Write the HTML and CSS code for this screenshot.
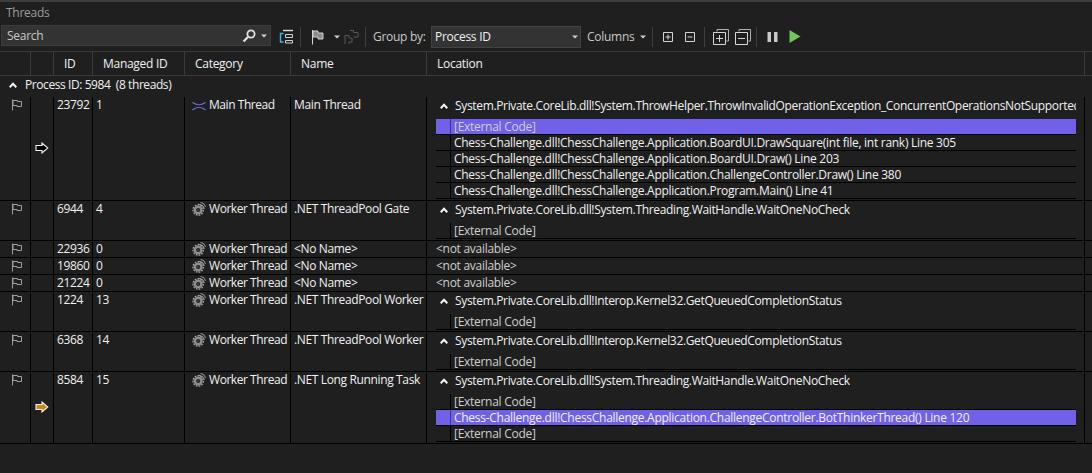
FILE: index.html
```html
<!DOCTYPE html>
<html lang="en">
<head>
<meta charset="utf-8">
<title>Threads</title>
<link rel="stylesheet" href="styles.css">
</head>
<body>
<svg class="defs" width="0" height="0" aria-hidden="true">
  <defs>
    <linearGradient id="fish" x1="0" x2="1" y1="0" y2="0">
      <stop offset="0" stop-color="#3f8fe0"/><stop offset="0.3" stop-color="#7d5cc9"/><stop offset="0.7" stop-color="#7d5cc9"/><stop offset="1" stop-color="#3f8fe0"/>
    </linearGradient>
  </defs>
  <symbol id="flag" viewBox="0 0 12 12"><path d="M1.500 0.500V11.500" stroke="#9a9a9a" fill="none"/><path d="M2 1.500H6.500V2.500H10.500V7.500H6V6.500H2Z" fill="#1f1f1f" stroke="#a0a0a0"/></symbol>
  <symbol id="gear" viewBox="0 0 14 14">
    <path d="M6.500 2.200a6.500 6.500 0 0 1 5.800 4.800" stroke="#9a9a9a" stroke-width="1.100" fill="none"/>
    <path d="M8.500 0.500a6.500 6.500 0 0 1 5 4.500" stroke="#8a8a8a" stroke-width="1.100" fill="none"/>
    <circle cx="6.200" cy="8" r="5.200" fill="none" stroke="#a4a4a4" stroke-width="1.400" stroke-dasharray="1.700 1.200"/>
    <circle cx="6.200" cy="8" r="3.300" fill="none" stroke="#8e8e8e" stroke-width="2.400"/>
    <circle cx="6.200" cy="8" r="1.400" fill="#3a3a3a"/>
  </symbol>
  <symbol id="chev" viewBox="0 0 8 6"><path d="M0.700 5.200L4 1.800L7.300 5.200" fill="none" stroke="#f4f4f4" stroke-width="2"/></symbol>
  <symbol id="tri" viewBox="0 0 6 4"><path d="M0 0.500H6L3 3.500Z" fill="#d0d0d0"/></symbol>
  <symbol id="arrow" viewBox="0 0 14 12"><path d="M1 3.500H7V1L12.800 6L7 11V8.500H1Z" stroke="#f1f1f1" stroke-width="1.100"/></symbol>
</svg>
<main class="panel">
  <div class="title">Threads</div>
  <div class="toolbar">
    <div class="search">
      <span class="search-text">Search</span>
      <svg class="ic-search" width="14" height="14" viewBox="0 0 14 14"><circle cx="9" cy="5" r="3.600" fill="none" stroke="#e2e2e2" stroke-width="1.800"/><path d="M6.200 7.800L1.500 12.500" stroke="#e2e2e2" stroke-width="2.200"/></svg>
      <svg class="ic-tri" width="6" height="4"><use href="#tri"/></svg>
    </div>
    <svg class="ic-list" width="15" height="15" viewBox="0 0 15 15"><path d="M4 1.500H14" fill="none" stroke="#e0e0e0" stroke-width="1.400"/><path d="M6.500 5.500H13.500V8.500H6.500ZM6.500 11.500H13.500V14H6.500Z" fill="none" stroke="#d4d4d4"/><path d="M4.500 4.500H1.500V13H4.500" fill="none" stroke="#3fb6e8" stroke-width="1.400"/></svg>
    <span class="sep sep-a"></span>
    <svg class="ic-flag-big" width="13" height="16" viewBox="0 0 13 16"><path d="M1.500 1V15.500" stroke="#d8d8d8"/><path d="M2 2H7V4H12V10H7V8H2Z" fill="#8c8c8c" stroke="#d0d0d0"/></svg>
    <svg class="ic-tri tri-flag" width="6" height="4"><use href="#tri"/></svg>
    <svg class="ic-flags" width="15" height="15" viewBox="0 0 15 15"><path d="M1 6.500H5V9H8V13H5V15M1 6V15M6 1.500H9.500V3.500H14V8H9.500" fill="none" stroke="#565656"/></svg>
    <span class="sep sep-b"></span>
    <span class="label">Group by:</span>
    <div class="combo"><span>Process ID</span><svg width="6" height="4"><use href="#tri"/></svg></div>
    <span class="columns">Columns</span>
    <svg class="ic-tri tri-col" width="6" height="4"><use href="#tri"/></svg>
    <span class="sep sep-c"></span>
    <svg class="ic-plus" width="10" height="10" viewBox="0 0 10 10"><path d="M0.500 0.500H9.500V9.500H0.500ZM2.500 5H7.500M5 2.500V7.500" fill="none" stroke="#d4d4d4"/></svg>
    <svg class="ic-minus" width="10" height="10" viewBox="0 0 10 10"><path d="M0.500 0.500H9.500V9.500H0.500ZM2.500 5H7.500" fill="none" stroke="#d4d4d4"/></svg>
    <span class="sep sep-d"></span>
    <svg class="ic-stack" width="16" height="16" viewBox="0 0 16 16"><path d="M4 2.500V0.500H15.500V12H13.500" fill="none" stroke="#b0b0b0"/><path d="M0.500 3.500H12.500V15.500H0.500ZM3 9.500H10M6.500 6V13" fill="#1f1f1f" stroke="#d8d8d8"/></svg>
    <svg class="ic-stack2" width="16" height="16" viewBox="0 0 16 16"><path d="M4 2.500V0.500H15.500V12H13.500" fill="none" stroke="#b0b0b0"/><path d="M0.500 3.500H12.500V15.500H0.500ZM3 9.500H10" fill="#1f1f1f" stroke="#d8d8d8"/></svg>
    <span class="sep sep-e"></span>
    <svg class="ic-pause" width="11" height="10" viewBox="0 0 11 10"><path d="M0.500 0H4V10H0.500ZM7 0H10.500V10H7Z" fill="#c8c8c8"/></svg>
    <svg class="ic-play" width="12" height="13" viewBox="0 0 12 13"><path d="M0.500 0V13L11.500 6.500Z" fill="#6fc75d"/></svg>
  </div>
  <div class="cols head">
    <div class="hc"></div><div class="hc"></div><div class="hc">ID</div><div class="hc">Managed ID</div><div class="hc">Category</div><div class="hc">Name</div><div class="hc">Location</div><div class="hc last"></div>
  </div>
  <div class="group"><svg width="8" height="6"><use href="#chev"/></svg><span>Process ID: 5984&nbsp; (8 threads)</span></div>
  <div class="rows">
    <div class="cols row">
      <div class="c"><svg class="flag" width="12" height="12"><use href="#flag"/></svg></div>
      <div class="c mark"><svg width="14" height="12" fill="#000"><use href="#arrow"/></svg></div>
      <div class="c t">23792</div><div class="c t">1</div>
      <div class="c cat"><svg width="14" height="14" viewBox="0 0 14 14"><path d="M0.500 4.500Q7 9 13.500 4.500M0.500 12Q7 6.500 13.500 12" fill="none" stroke="url(#fish)" stroke-width="1.100"/></svg><span>Main Thread</span></div>
      <div class="c t">Main Thread</div>
      <div class="c loc">
        <div class="top"><svg width="8" height="6"><use href="#chev"/></svg><span>System.Private.CoreLib.dll!System.ThrowHelper.ThrowInvalidOperationException_ConcurrentOperationsNotSupported</span></div>
        <div class="fr hl dim"><i></i><span>[External Code]</span></div>
        <div class="fr"><i></i><span>Chess-Challenge.dll!ChessChallenge.Application.BoardUI.DrawSquare(int file, int rank) Line 305</span></div>
        <div class="fr"><i></i><span>Chess-Challenge.dll!ChessChallenge.Application.BoardUI.Draw() Line 203</span></div>
        <div class="fr"><i></i><span>Chess-Challenge.dll!ChessChallenge.Application.ChallengeController.Draw() Line 380</span></div>
        <div class="fr"><i></i><span>Chess-Challenge.dll!ChessChallenge.Application.Program.Main() Line 41</span></div>
      </div>
      <div class="c"></div>
    </div>
    <div class="cols row">
      <div class="c"><svg class="flag" width="12" height="12"><use href="#flag"/></svg></div><div class="c"></div>
      <div class="c t">6944</div><div class="c t">4</div>
      <div class="c cat"><svg width="14" height="14"><use href="#gear"/></svg><span>Worker Thread</span></div>
      <div class="c t">.NET ThreadPool Gate</div>
      <div class="c loc">
        <div class="top"><svg width="8" height="6"><use href="#chev"/></svg><span>System.Private.CoreLib.dll!System.Threading.WaitHandle.WaitOneNoCheck</span></div>
        <div class="fr dim"><i></i><span>[External Code]</span></div>
      </div>
      <div class="c"></div>
    </div>
    <div class="cols row">
      <div class="c"><svg class="flag" width="12" height="12"><use href="#flag"/></svg></div><div class="c"></div>
      <div class="c t">22936</div><div class="c t">0</div>
      <div class="c cat"><svg width="14" height="14"><use href="#gear"/></svg><span>Worker Thread</span></div>
      <div class="c t">&lt;No Name&gt;</div>
      <div class="c loc"><div class="na">&lt;not available&gt;</div></div>
      <div class="c"></div>
    </div>
    <div class="cols row">
      <div class="c"><svg class="flag" width="12" height="12"><use href="#flag"/></svg></div><div class="c"></div>
      <div class="c t">19860</div><div class="c t">0</div>
      <div class="c cat"><svg width="14" height="14"><use href="#gear"/></svg><span>Worker Thread</span></div>
      <div class="c t">&lt;No Name&gt;</div>
      <div class="c loc"><div class="na">&lt;not available&gt;</div></div>
      <div class="c"></div>
    </div>
    <div class="cols row">
      <div class="c"><svg class="flag" width="12" height="12"><use href="#flag"/></svg></div><div class="c"></div>
      <div class="c t">21224</div><div class="c t">0</div>
      <div class="c cat"><svg width="14" height="14"><use href="#gear"/></svg><span>Worker Thread</span></div>
      <div class="c t">&lt;No Name&gt;</div>
      <div class="c loc"><div class="na">&lt;not available&gt;</div></div>
      <div class="c"></div>
    </div>
    <div class="cols row">
      <div class="c"><svg class="flag" width="12" height="12"><use href="#flag"/></svg></div><div class="c"></div>
      <div class="c t">1224</div><div class="c t">13</div>
      <div class="c cat"><svg width="14" height="14"><use href="#gear"/></svg><span>Worker Thread</span></div>
      <div class="c t">.NET ThreadPool Worker</div>
      <div class="c loc">
        <div class="top"><svg width="8" height="6"><use href="#chev"/></svg><span>System.Private.CoreLib.dll!Interop.Kernel32.GetQueuedCompletionStatus</span></div>
        <div class="fr dim"><i></i><span>[External Code]</span></div>
      </div>
      <div class="c"></div>
    </div>
    <div class="cols row">
      <div class="c"><svg class="flag" width="12" height="12"><use href="#flag"/></svg></div><div class="c"></div>
      <div class="c t">6368</div><div class="c t">14</div>
      <div class="c cat"><svg width="14" height="14"><use href="#gear"/></svg><span>Worker Thread</span></div>
      <div class="c t">.NET ThreadPool Worker</div>
      <div class="c loc">
        <div class="top"><svg width="8" height="6"><use href="#chev"/></svg><span>System.Private.CoreLib.dll!Interop.Kernel32.GetQueuedCompletionStatus</span></div>
        <div class="fr dim"><i></i><span>[External Code]</span></div>
      </div>
      <div class="c"></div>
    </div>
    <div class="cols row">
      <div class="c"><svg class="flag" width="12" height="12"><use href="#flag"/></svg></div>
      <div class="c mark"><svg width="14" height="12" fill="#c88a0c"><use href="#arrow"/></svg></div>
      <div class="c t">8584</div><div class="c t">15</div>
      <div class="c cat"><svg width="14" height="14"><use href="#gear"/></svg><span>Worker Thread</span></div>
      <div class="c t">.NET Long Running Task</div>
      <div class="c loc">
        <div class="top"><svg width="8" height="6"><use href="#chev"/></svg><span>System.Private.CoreLib.dll!System.Threading.WaitHandle.WaitOneNoCheck</span></div>
        <div class="fr dim"><i></i><span>[External Code]</span></div>
        <div class="fr hl"><i></i><span>Chess-Challenge.dll!ChessChallenge.Application.ChallengeController.BotThinkerThread() Line 120</span></div>
        <div class="fr dim"><i></i><span>[External Code]</span></div>
      </div>
      <div class="c"></div>
    </div>
  </div>
</main>
</body>
</html>
```
FILE: styles.css
```css
* { box-sizing: border-box; }
html, body { margin: 0; height: 100%; background: #1f1f1f; overflow: hidden; }
body { font: 12px/16px "Open Sans", "Noto Sans", sans-serif; letter-spacing: -0.28px; color: #f1f1f1; }
.defs { display: block; height: 0; }
svg { display: block; flex: none; }
.panel { height: 473px; border-top: 2px solid #3d3d3d; }
.title { height: 23px; padding: 2px 0 0 6px; color: #9d9d9d; line-height: 17px; }
.toolbar { height: 26px; padding-bottom: 3px; display: flex; align-items: center; }
.search { width: 270px; height: 21px; margin: 0 0 2px 1px; background: #333; border: 1px solid #3c3c3c; display: flex; align-items: center; padding-left: 5px; color: #c8c8c8; }
.search-text { flex: 1; }
.ic-search { margin-right: 5px; }
.search .ic-tri { margin-right: 3px; }
.ic-list { margin-left: 8px; }
.sep { width: 1px; height: 20px; background: #3f3f3f; }
.sep-a { margin-left: 6px; }
.ic-flag-big { margin-left: 10px; }
.tri-flag { margin-left: 10px; }
.ic-flags { margin-left: 4px; }
.sep-b { margin-left: 6px; }
.label { margin-left: 7px; width: 58px; color: #c8c8c8; }
.combo { width: 150px; height: 22px; margin-top: 1px; background: #333; border: 1px solid #434343; padding: 0 3px; display: flex; align-items: center; justify-content: space-between; }
.combo svg { margin-right: -1px; }
.columns { margin-left: 6px; width: 53px; color: #c8c8c8; }
.sep-c { margin-left: 6px; }
.ic-plus { margin-left: 10px; }
.ic-minus { margin-left: 12px; }
.sep-d { margin-left: 9px; }
.ic-stack { margin-left: 8px; }
.ic-stack2 { margin-left: 6px; }
.sep-e { margin-left: 5px; }
.ic-pause { margin-left: 10px; }
.ic-play { margin-left: 11px; }
.cols { display: grid; grid-template-columns: 31px 23px 39px 92px 106px 136px 658px 7px; }
.head { height: 25px; border-top: 1px solid #3a3a3a; border-bottom: 1px solid #3a3a3a; }
.hc { border-right: 1px solid #3a3a3a; padding: 3px 0 0 10px; line-height: 17px; }
.hc.last { border-right: 0; }
.group { height: 21px; display: flex; align-items: center; padding: 0 0 4px 9px; gap: 8px; letter-spacing: -0.42px; }
.row { border-bottom: 1px solid #000; }
.c { border-right: 1px solid #000; padding-left: 3px; min-width: 0; }
.c:last-child { border-right: 0; }
.t { white-space: nowrap; overflow: hidden; letter-spacing: -0.36px; }
.flag { margin: 2px 0 0 8px; }
.mark { display: flex; align-items: center; padding: 0 0 2px 4px; }
.cat { display: flex; align-items: flex-start; padding-left: 7px; gap: 3px; letter-spacing: -0.45px; }
.cat svg { margin-top: 1px; }
.cat span { white-space: nowrap; }
.loc { padding: 0 8px 1px 9px; overflow: hidden; }
.top { height: 22px; display: flex; align-items: flex-start; padding: 1px 0 0 4px; gap: 7px; white-space: nowrap; overflow: hidden; letter-spacing: -0.34px; }
.top svg { margin-top: 5px; }
.top span { overflow: hidden; }
.na { color: #d0d0d0; height: 15px; }
.fr { height: 16px; display: flex; border-bottom: 1px solid #000; white-space: nowrap; }
.fr i { width: 15px; border-right: 1px solid #000; flex: none; }
.fr span { padding-left: 3px; line-height: 15px; }
.fr.dim span { color: #cfcfcf; }
.hl { background: #7160e8; }
.hl i { border-right-color: #3f358a; }
```
